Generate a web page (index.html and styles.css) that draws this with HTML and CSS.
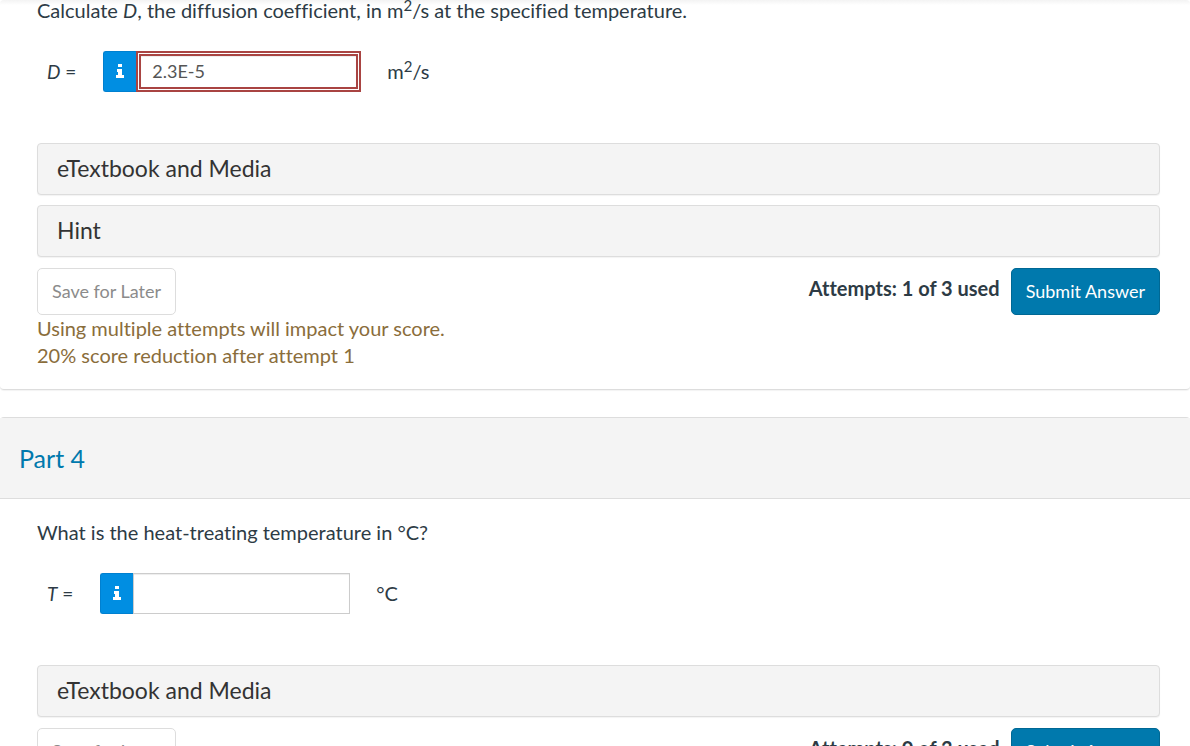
FILE: index.html
```html
<!DOCTYPE html>
<html lang="en">
<head>
<meta charset="utf-8">
<title>Diffusion problem</title>
<link rel="stylesheet" href="styles.css">
</head>
<body>
<main class="page">
  <section class="part part-first">
    <div class="part-body">
      <p class="question">Calculate <i>D</i>, the diffusion coefficient, in m<sup>2</sup>/s at the specified temperature.</p>
      <div class="answer">
        <label class="symbol" for="answer-d"><i>D</i> =</label>
        <div class="field">
          <button class="info" type="button" aria-label="Answer information">
            <svg class="info-icon" viewBox="0 0 8 14" aria-hidden="true"><path d="M2 0h4v3H2zM1 5h5v6h2v3H0v-3h2V8H1z"/></svg>
          </button>
          <input class="entry entry-wrong" id="answer-d" type="text" value="2.3E-5">
        </div>
        <span class="unit">m<sup>2</sup>/s</span>
      </div>
      <button class="panel" type="button">eTextbook and Media</button>
      <button class="panel" type="button">Hint</button>
      <div class="actions">
        <button class="btn btn-save" type="button">Save for Later</button>
        <strong class="attempts">Attempts: 1 of 3 used</strong>
        <button class="btn btn-submit" type="button">Submit Answer</button>
      </div>
      <p class="warning">Using multiple attempts will impact your score.<br>20% score reduction after attempt 1</p>
    </div>
  </section>
  <section class="part">
    <header class="part-header"><h2 class="part-title">Part 4</h2></header>
    <div class="part-body">
      <p class="question">What is the heat-treating temperature in °C?</p>
      <div class="answer">
        <label class="symbol" for="answer-t"><i>T</i> =</label>
        <div class="field">
          <button class="info" type="button" aria-label="Answer information">
            <svg class="info-icon" viewBox="0 0 8 14" aria-hidden="true"><path d="M2 0h4v3H2zM1 5h5v6h2v3H0v-3h2V8H1z"/></svg>
          </button>
          <input class="entry" id="answer-t" type="text">
        </div>
        <span class="unit">°C</span>
      </div>
      <button class="panel" type="button">eTextbook and Media</button>
      <div class="actions">
        <button class="btn btn-save" type="button">Save for Later</button>
        <strong class="attempts">Attempts: 0 of 3 used</strong>
        <button class="btn btn-submit" type="button">Submit Answer</button>
      </div>
    </div>
  </section>
</main>
</body>
</html>
```
FILE: styles.css
```css
* { box-sizing: border-box; }
body {
  margin: 0;
  height: 100vh;
  overflow: hidden;
  background: #fff;
  color: #2d3b45;
  font: 20px/27px Lato, "Liberation Sans", sans-serif;
  font-variant-ligatures: no-common-ligatures;
}
button, input { font-family: inherit; font-variant-ligatures: inherit; margin: 0; }
sup { font-size: 15px; line-height: 0; position: relative; top: -7px; vertical-align: baseline; }
.part {
  border-top: 1px solid #ddd;
  border-bottom: 1px solid #ddd;
  border-radius: 4px;
  box-shadow: 0 1px 1px rgba(0, 0, 0, .05);
  margin-bottom: 27px;
}
.part-first { border-top: 0; background: linear-gradient(#f3f3f3, #fff 5px); }
.part-first .part-body { padding-top: 0; }
.part-header {
  background: #f4f4f4;
  border-bottom: 1px solid #ddd;
  padding: 24px 19px;
}
.part-title { margin: 0; font-size: 25px; line-height: 32px; font-weight: 400; color: #0079ad; }
.part-body { padding: 20px 30px 20px 37px; }
.question { margin: 0 0 27px; }
.part-first .question { line-height: 20px; margin-bottom: 31px; }
.answer { display: flex; align-items: center; margin-bottom: 51px; padding-left: 10px; }
.symbol { font-size: 19px; margin-right: 27px; }
.field { display: flex; }
.info {
  width: 33px;
  height: 41px;
  padding: 0 0 2px;
  border: 1px solid #0080d0;
  border-right: 0;
  border-radius: 3px 0 0 3px;
  background: #008ee2;
  display: grid;
  place-items: center;
}
.info-icon { width: 8px; height: 14px; fill: #fff; }
.entry {
  width: 217px;
  height: 41px;
  padding: 0 14px 2px;
  border: 1px solid #ccc;
  border-radius: 0;
  color: #555;
  background: #fff;
  font-size: 18px;
  box-shadow: inset 0 1px 1px rgba(0, 0, 0, .075);
}
.entry-wrong { width: 225px; border: 5px double #a94442; padding: 0 11px 2px; }
.unit { margin-left: 26px; }
.panel {
  display: block;
  width: 100%;
  height: 52px;
  margin-bottom: 10px;
  padding: 0 19px 2px;
  border: 1px solid #ddd;
  border-radius: 4px;
  background: #f4f4f4;
  box-shadow: 0 1px 1px rgba(0, 0, 0, .05);
  color: #333;
  font-size: 23px;
  text-align: left;
}
.actions { display: flex; padding-top: 1px; }
.btn { height: 47px; padding: 0 14px 2px; border: 1px solid #ddd; border-radius: 5px; font-size: 18px; }
.btn-save { background: #fff; color: #8b8b8b; }
.attempts { margin: 7px 11px 0 auto; font-weight: 700; }
.btn-submit { background: #0079ad; border-color: #006894; color: #fff; }
.warning { margin: 0; color: #8a6d3b; }
```
